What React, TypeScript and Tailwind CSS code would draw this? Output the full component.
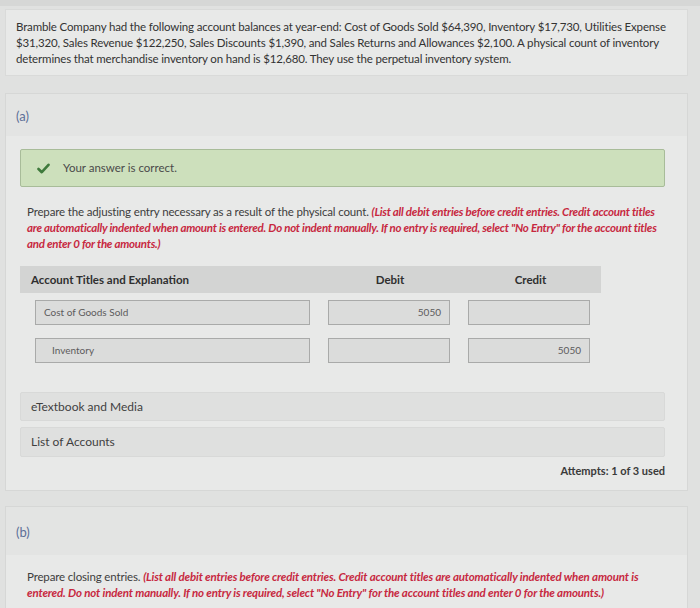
import React from 'react';

const font = { fontFamily: 'Lato, "Open Sans", sans-serif' };

function EntryInput({ value, align = 'left', indent = false }: { value?: string; align?: 'left' | 'right'; indent?: boolean }) {
    return (
        <div
            className={`h-[25px] border border-[#a9aaa9] bg-[#dbdcdb] flex items-center text-[10px] text-[#5b5b5b] ${
                align === 'right' ? 'justify-end pr-[8px]' : indent ? 'pl-[16px]' : 'pl-[8px]'
            }`}
        >
            {value}
        </div>
    );
}

export default function App() {
    return (
        <div className="w-[700px] h-[608px] overflow-hidden bg-[#e0e1e0] text-[#333]" style={font}>
            {/* top edge */}
            <div className="h-[6px] bg-[#d6d7d6]" />

            {/* Question text */}
            <div className="ml-[5px] mr-[12px] mt-[3px] border border-[#d9dad9] bg-[#e8e9e8] px-[10px] pt-[9px] pb-[8px] text-[11.5px] leading-[16px] tracking-[-0.15px]">
                Bramble Company had the following account balances at year-end: Cost of Goods Sold $64,390, Inventory $17,730, Utilities Expense
                $31,320, Sales Revenue $122,250, Sales Discounts $1,390, and Sales Returns and Allowances $2,100. A physical count of inventory
                determines that merchandise inventory on hand is $12,680. They use the perpetual inventory system.
            </div>

            {/* Part (a) */}
            <div className="ml-[5px] mr-[12px] mt-[17px] border border-[#d6d7d6]">
                <div className="h-[42px] bg-[#e3e4e3] px-[10px] pt-[13px] text-[13px] text-[#5d6f98]">(a)</div>
                <div className="bg-[#e8e9e8] pl-[14px] pr-[22px] pt-[13px] pb-[12px]">
                    {/* correct banner */}
                    <div className="h-[38px] border border-[#a8bc99] bg-[#cde0bc] rounded-[2px] flex items-center pl-[16px] gap-[13px]">
                        <svg width="13" height="11" viewBox="0 0 13 11">
                            <path d="M1.5 6 L4.8 9.2 L11.5 1.8" fill="none" stroke="#3f7a3c" strokeWidth="2.6" strokeLinecap="round" strokeLinejoin="round" />
                        </svg>
                        <span className="text-[11.5px] text-[#4a4a4a]">Your answer is correct.</span>
                    </div>

                    {/* instructions */}
                    <p className="mt-[17px] pl-[7px] text-[11.5px] leading-[16px] tracking-[-0.15px] text-[#3d3d3d]">
                        Prepare the adjusting entry necessary as a result of the physical count.{' '}
                        <em className="font-bold text-[#c7283f] tracking-[-0.25px]">
                            (List all debit entries before credit entries. Credit account titles are automatically indented when amount is entered. Do not indent manually. If no entry is required, select "No Entry" for the account titles
                            <br />
                            and enter 0 for the amounts.)
                        </em>
                    </p>

                    {/* journal table */}
                    <div className="mt-[14px] w-[581px]">
                        <div className="h-[27px] bg-[#d3d4d3] grid grid-cols-[300px_140px_141px] items-center text-[11.5px] font-bold text-[#2f2f2f]">
                            <span className="pl-[11px]">Account Titles and Explanation</span>
                            <span className="text-center">Debit</span>
                            <span className="text-center">Credit</span>
                        </div>
                        <div className="mt-[7px] pl-[15px] grid grid-cols-[275px_122px_122px] gap-x-[18px] gap-y-[13px]">
                            <EntryInput value="Cost of Goods Sold" />
                            <EntryInput value="5050" align="right" />
                            <EntryInput />
                            <EntryInput value="Inventory" indent />
                            <EntryInput />
                            <EntryInput value="5050" align="right" />
                        </div>
                    </div>

                    {/* resources */}
                    <div className="mt-[29px] h-[29px] bg-[#dfe0df] border border-[#d8d9d8] rounded-[2px] flex items-center pl-[10px] text-[12px] text-[#3f3f3f]">
                        eTextbook and Media
                    </div>
                    <div className="mt-[6px] h-[30px] bg-[#dfe0df] border border-[#d8d9d8] rounded-[2px] flex items-center pl-[10px] text-[12px] text-[#3f3f3f]">
                        List of Accounts
                    </div>
                    <div className="mt-[7px] text-right text-[11px] leading-[14px] font-bold text-[#3a3a3a]">Attempts: 1 of 3 used</div>
                </div>
            </div>

            {/* Part (b) */}
            <div className="ml-[5px] mr-[12px] mt-[15px] border border-[#d6d7d6]">
                <div className="h-[48px] bg-[#e3e4e3] px-[10px] pt-[16px] text-[13px] text-[#5d6f98]">(b)</div>
                <div className="bg-[#e8e9e8] px-[21px] pt-[14px] pb-[10px] text-[11.5px] leading-[16px] tracking-[-0.15px] text-[#3d3d3d]">
                    Prepare closing entries.{' '}
                    <em className="font-bold text-[#c7283f]">
                        (List all debit entries before credit entries. Credit account titles are automatically indented when amount is entered. Do not indent manually. If no entry is required, select "No Entry" for the account titles and enter 0 for the amounts.)
                    </em>
                </div>
            </div>
        </div>
    );
}
